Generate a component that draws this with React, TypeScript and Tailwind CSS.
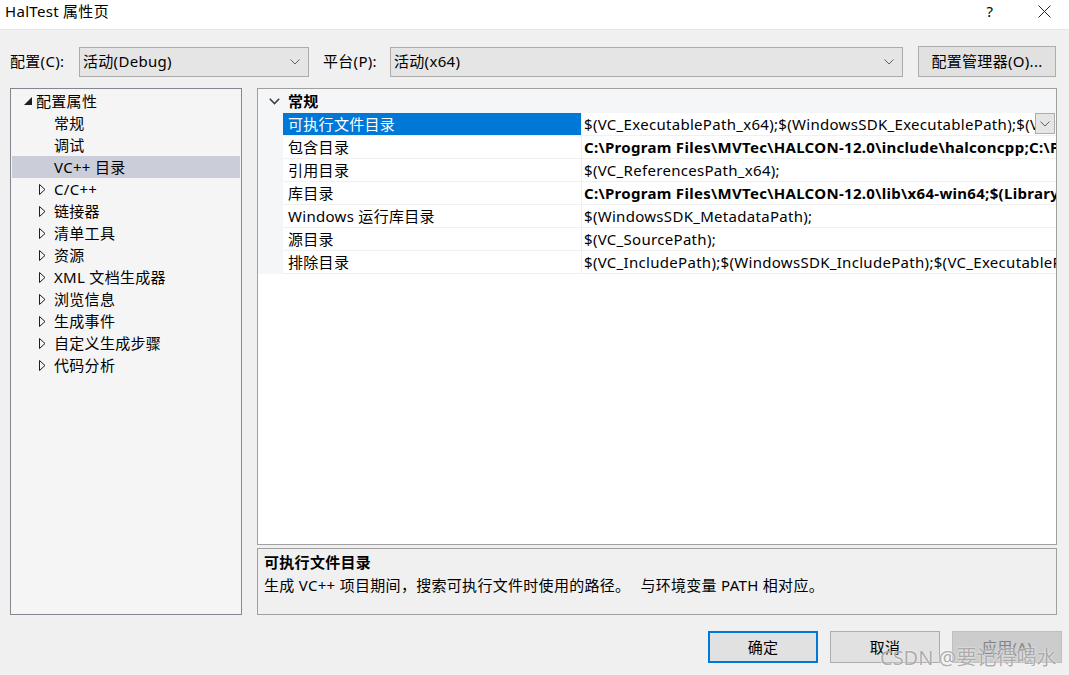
import React from "react";

const font = { fontFamily: '"Noto Sans", "Noto Sans CJK SC", sans-serif' };

const treeItems: { label: string; level: number; arrow?: "open" | "closed"; selected?: boolean }[] = [
  { label: "配置属性", level: 0, arrow: "open" },
  { label: "常规", level: 1 },
  { label: "调试", level: 1 },
  { label: "VC++ 目录", level: 1, selected: true },
  { label: "C/C++", level: 1, arrow: "closed" },
  { label: "链接器", level: 1, arrow: "closed" },
  { label: "清单工具", level: 1, arrow: "closed" },
  { label: "资源", level: 1, arrow: "closed" },
  { label: "XML 文档生成器", level: 1, arrow: "closed" },
  { label: "浏览信息", level: 1, arrow: "closed" },
  { label: "生成事件", level: 1, arrow: "closed" },
  { label: "自定义生成步骤", level: 1, arrow: "closed" },
  { label: "代码分析", level: 1, arrow: "closed" },
];

const rows: { name: string; value: string; bold?: boolean }[] = [
  { name: "可执行文件目录", value: "$(VC_ExecutablePath_x64);$(WindowsSDK_ExecutablePath);$(VS_ExecutablePath);$(MSBuild_ExecutablePath)" },
  { name: "包含目录", value: "C:\\Program Files\\MVTec\\HALCON-12.0\\include\\halconcpp;C:\\Program Files\\MVTec\\HALCON-12.0\\include", bold: true },
  { name: "引用目录", value: "$(VC_ReferencesPath_x64);" },
  { name: "库目录", value: "C:\\Program Files\\MVTec\\HALCON-12.0\\lib\\x64-win64;$(LibraryPath)", bold: true },
  { name: "Windows 运行库目录", value: "$(WindowsSDK_MetadataPath);" },
  { name: "源目录", value: "$(VC_SourcePath);" },
  { name: "排除目录", value: "$(VC_IncludePath);$(WindowsSDK_IncludePath);$(VC_ExecutablePath_x64)" },
];

function Chevron({ className = "" }: { className?: string }) {
  return (
    <svg width="10" height="6" viewBox="0 0 10 6" className={className}>
      <path d="M0.5 0.5 L5 5 L9.5 0.5" fill="none" stroke="#606060" strokeWidth="1" />
    </svg>
  );
}

function Dropdown({ text, width }: { text: string; width: string }) {
  return (
    <div className={`${width} h-[30px] bg-[#e5e5e5] border border-[#acacac] flex items-center justify-between pl-[3px] pr-[8px] text-[15px] text-black`}>
      <span>{text}</span>
      <Chevron />
    </div>
  );
}

export default function App() {
  return (
    <div className="relative w-[1069px] h-[675px] bg-[#f0f0f0] overflow-hidden text-black tracking-[0.3px]" style={font}>
      {/* title bar */}
      <div className="h-[30px] bg-white flex items-center justify-between border-b border-[#e8e8e8]">
        <span className="pl-[5px] text-[15px] pb-[6px]">HalTest 属性页</span>
        <div className="flex items-center pb-[6px]">
          <span className="w-[46px] text-center text-[15px] mr-[6px]">?</span>
          <span className="w-[50px] flex justify-center">
            <svg width="13" height="13" viewBox="0 0 13 13">
              <path d="M0.5 0.5 L12.5 12.5 M12.5 0.5 L0.5 12.5" stroke="#222" strokeWidth="1" />
            </svg>
          </span>
        </div>
      </div>

      {/* config row */}
      <div className="flex items-center pt-[16px] pl-[10px] h-[47px]">
        <span className="text-[15px] w-[69px]">配置(C):</span>
        <Dropdown text="活动(Debug)" width="w-[230px]" />
        <span className="text-[15px] ml-[14px] w-[67px]">平台(P):</span>
        <Dropdown text="活动(x64)" width="w-[513px]" />
        <button className="ml-[15px] w-[138px] h-[31px] bg-[#e1e1e1] border border-[#adadad] text-[15px]">
          配置管理器(O)...
        </button>
      </div>

      {/* main area */}
      <div className="flex mt-[11px] pl-[10px] h-[527px]">
        {/* tree */}
        <div className="w-[232px] h-full bg-[#f5f5f5] border border-[#828790] pt-[1px] px-[1px]">
          {treeItems.map((it) => (
            <div
              key={it.label}
              className={`h-[22px] flex items-center text-[15px] ${it.selected ? "bg-[#cbcdd9]" : ""}`}
            >
              {it.level === 0 ? (
                <>
                  <span className="w-[24px] flex justify-end pr-[4px]">
                    <svg width="8" height="8" viewBox="0 0 8 8">
                      <path d="M8 0 L8 8 L0 8 Z" fill="#1e1e1e" />
                    </svg>
                  </span>
                  <span>{it.label}</span>
                </>
              ) : (
                <>
                  <span className="w-[42px] flex justify-end pr-[8px]">
                    {it.arrow === "closed" && (
                      <svg width="7" height="11" viewBox="0 0 7 11">
                        <path d="M0.5 0.5 L6 5.5 L0.5 10.5 Z" fill="none" stroke="#1e1e1e" strokeWidth="1" />
                      </svg>
                    )}
                  </span>
                  <span>{it.label}</span>
                </>
              )}
            </div>
          ))}
        </div>

        {/* right side */}
        <div className="ml-[15px] w-[800px] h-full flex flex-col">
          <div className="h-[457px] bg-white border border-[#a0a0a0] flex flex-col overflow-hidden">
            <div className="h-[24px] bg-[#f5f6f8] flex items-center shrink-0">
              <span className="w-[30px] flex justify-center pl-[2px]">
                <svg width="11" height="7" viewBox="0 0 11 7">
                  <path d="M0.8 0.8 L5.5 5.5 L10.2 0.8" fill="none" stroke="#404040" strokeWidth="1.6" />
                </svg>
              </span>
              <span className="text-[15px] font-bold">常规</span>
            </div>
            {rows.map((r, i) => (
              <div key={r.name} className="h-[23px] flex shrink-0">
                <div className="w-[25px] bg-[#f5f6f8] shrink-0" />
                <div
                  className={`w-[298px] shrink-0 flex items-center pl-[5px] text-[15px] border-b border-[#f0f0f0] ${
                    i === 0 ? "bg-[#0078d7] text-white border-[#0078d7]" : "bg-white"
                  }`}
                >
                  {r.name}
                </div>
                <div className="w-[1px] bg-[#f0f0f0] shrink-0" />
                <div className="relative flex-1 flex items-center pl-[2px] border-b border-[#f0f0f0] overflow-hidden whitespace-nowrap min-w-0">
                  <span className={`text-[15px] ${r.bold ? "font-bold" : ""}`}>{r.value}</span>
                  {i === 0 && (
                    <div className="absolute right-[1px] top-0 w-[20px] h-[21px] bg-[#e5e5e5] border border-[#acacac] flex items-center justify-center">
                      <Chevron />
                    </div>
                  )}
                </div>
              </div>
            ))}
          </div>
          <div className="mt-[3px] h-[67px] border border-[#a0a0a0] bg-[#f0f0f0] px-[6px] pt-[2px]">
            <div className="text-[15px] font-bold leading-[22px]">可执行文件目录</div>
            <div className="text-[15px] leading-[24px]">
              生成 VC++ 项目期间，搜索可执行文件时使用的路径。<span className="ml-[10px]">与环境变量 PATH 相对应。</span>
            </div>
          </div>
        </div>
      </div>

      {/* buttons */}
      <div className="flex pl-[708px] mt-[16px] gap-[12px]">
        <button className="w-[110px] h-[32px] bg-[#e1e1e1] border-2 border-[#0078d7] text-[15px]">确定</button>
        <button className="w-[110px] h-[32px] bg-[#e1e1e1] border border-[#adadad] text-[15px]">取消</button>
        <button className="w-[110px] h-[32px] bg-[#cccccc] border border-[#bfbfbf] text-[15px] text-[#838383]">应用(A)</button>
      </div>

      {/* watermark */}
      <div className="absolute left-[880px] top-[643px] text-[20px] tracking-normal text-[#9a9a9a]/80" style={{ textShadow: "0 0 2px #fff" }}>
        CSDN @要记得喝水
      </div>
    </div>
  );
}
